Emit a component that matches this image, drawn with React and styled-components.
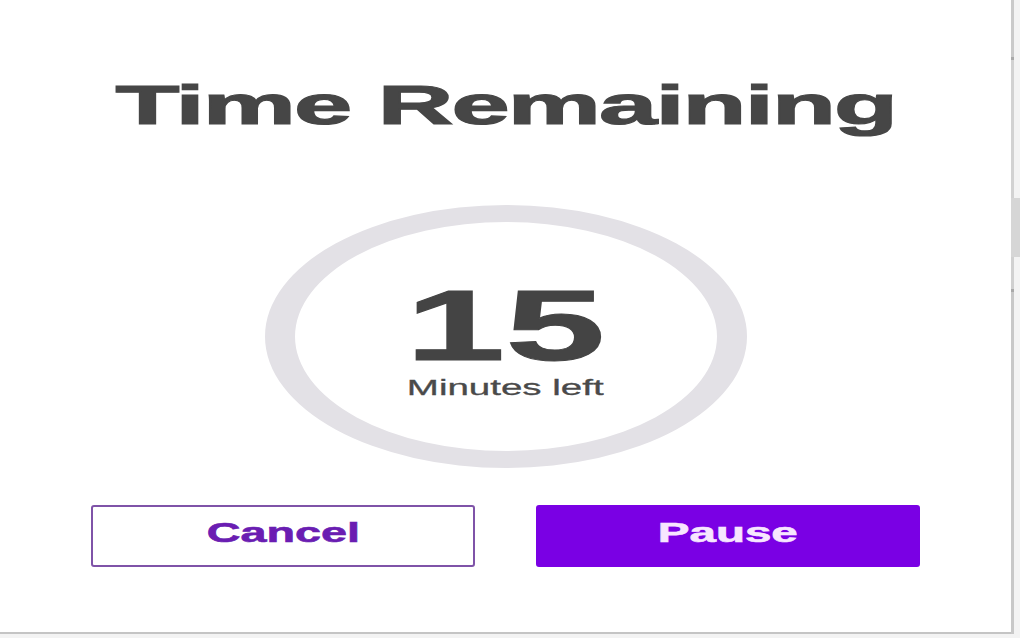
import React from 'react';
import styled, { createGlobalStyle } from 'styled-components';

const GlobalStyle = createGlobalStyle`
  html, body {
    margin: 0;
    padding: 0;
    background: #f3f3f3;
    font-family: "Liberation Sans", Arial, sans-serif;
  }
`;

const Window = styled.div`
  display: flex;
  width: 1020px;
  height: 634px;
`;

const Panel = styled.div`
  flex: 1;
  background: #ffffff;
  border-bottom: 2px solid #c4c4c4;
  display: flex;
  flex-direction: column;
  align-items: center;
`;

const Edge = styled.div`
  width: 9px;
  display: flex;
  flex-direction: column;
`;

const Segment = styled.div`
  height: ${p => p.h}px;
  width: ${p => (p.wide ? 9 : 3)}px;
  background: ${p => p.tone};
  flex: ${p => (p.fill ? 1 : 'none')};
`;

// the shot is stretched sideways, so text glyphs get widened
const Stretch = styled.span`
  display: inline-block;
  transform: scaleX(${p => p.k || 1.78});
  transform-origin: center;
`;

const Title = styled.h1`
  margin: 77px 0 0;
  font-size: 56px;
  line-height: 56px;
  font-weight: 700;
  letter-spacing: -1px;
  color: #464646;
  -webkit-text-stroke: 1.2px #464646;
`;

const Ring = styled.div`
  box-sizing: border-box;
  margin-top: 72px;
  width: 482px;
  height: 263px;
  border-style: solid;
  border-color: #e3e1e6;
  border-width: 17px 30px;
  border-radius: 50%;
  display: flex;
  flex-direction: column;
  align-items: center;
  justify-content: center;
`;

const Count = styled.div`
  font-size: 101px;
  line-height: 100px;
  font-weight: 700;
  color: #444444;
  -webkit-text-stroke: 1px #444444;
`;

const Caption = styled.div`
  margin-top: 2px;
  font-size: 22px;
  line-height: 22px;
  color: #4a4a4a;
  -webkit-text-stroke: 0.3px #4a4a4a;
`;

const Actions = styled.div`
  margin-top: 37px;
  display: flex;
  gap: 61px;
`;

const Button = styled.button`
  box-sizing: border-box;
  width: 384px;
  height: 62px;
  padding: 0 0 5px;
  border-radius: 3px;
  font-family: "Liberation Sans", Arial, sans-serif;
  font-size: 27px;
  font-weight: 700;
  display: flex;
  align-items: center;
  justify-content: center;
  cursor: pointer;
  border: 2px solid ${p => (p.primary ? '#7a00e4' : '#7f53a8')};
  background: ${p => (p.primary ? '#7a00e4' : '#ffffff')};
  color: ${p => (p.primary ? '#f7e6ff' : '#6a1db2')};
  -webkit-text-stroke: 0.6px ${p => (p.primary ? '#f7e6ff' : '#6a1db2')};
`;

export default function App() {
  return (
    <>
      <GlobalStyle />
      <Window>
        <Panel>
          <Title>
            <Stretch k={1.87}>Time Remaining</Stretch>
          </Title>
          <Ring>
            <Count>
              <Stretch>15</Stretch>
            </Count>
            <Caption>
              <Stretch k={1.75}>Minutes left</Stretch>
            </Caption>
          </Ring>
          <Actions>
            <Button>
              <Stretch k={1.73}>Cancel</Stretch>
            </Button>
            <Button primary>
              <Stretch k={1.76}>Pause</Stretch>
            </Button>
          </Actions>
        </Panel>
        <Edge>
          <Segment h={57} tone="#cacaca" />
          <Segment h={3} tone="#a9a9a9" />
          <Segment h={138} tone="#d2d2d2" />
          <Segment h={59} tone="#d6d6d6" wide />
          <Segment h={32} tone="#d0d0d0" />
          <Segment h={3} tone="#a9a9a9" />
          <Segment h={0} tone="#c8c8c8" fill />
        </Edge>
      </Window>
    </>
  );
}
